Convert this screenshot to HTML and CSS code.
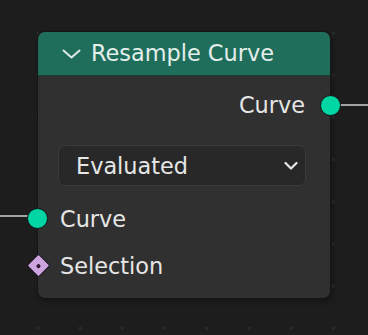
FILE: index.html
```html
<!DOCTYPE html>
<html>
<head>
<meta charset="utf-8">
<link rel="stylesheet" href="styles.css">
</head>
<body>
<div class="canvas">
  <div class="link link-out"></div>
  <div class="link link-in"></div>
  <div class="node">
    <div class="header">
      <svg class="chev" width="19" height="10" viewBox="0 0 19 10"><path d="M1.5 1.5 L9.5 8.5 L17.5 1.5" fill="none" stroke="#dfe9e6" stroke-width="2" stroke-linecap="round" stroke-linejoin="round"/></svg>
      <span class="title">Resample Curve</span>
    </div>
    <div class="body">
      <div class="row out">
        <span>Curve</span>
        <span class="socket circle right"></span>
      </div>
      <div class="dropdown">
        <span>Evaluated</span>
        <svg class="dd-chev" width="14" height="10" viewBox="0 0 14 10"><path d="M1.5 2 L7 7.5 L12.5 2" fill="none" stroke="#e6e6e6" stroke-width="2.2" stroke-linecap="round" stroke-linejoin="round"/></svg>
      </div>
      <div class="row in">
        <span class="socket circle left"></span>
        <span>Curve</span>
      </div>
      <div class="row in sel">
        <span class="socket diamond left"><span class="dot"></span></span>
        <span>Selection</span>
      </div>
    </div>
  </div>
</div>
</body>
</html>
```
FILE: styles.css
```css
html, body {
  margin: 0;
  padding: 0;
}
body {
  width: 368px;
  height: 335px;
  overflow: hidden;
  background-color: #1d1d1d;
  background-image: radial-gradient(circle at 21px 21px, #2a2a2a 0, #2a2a2a 1.4px, transparent 2px);
  background-size: 42.2px 42.2px;
  background-position: 17px 12px;
  font-family: "DejaVu Sans", sans-serif;
}
.canvas {
  position: relative;
  width: 368px;
  height: 335px;
  padding-top: 32px;
  box-sizing: border-box;
}
.link {
  position: absolute;
  height: 2px;
  background: #a3a3a3;
}
.link-out {
  left: 338px;
  width: 30px;
  top: 104px;
}
.link-in {
  left: 0;
  width: 30px;
  top: 215px;
}
.node {
  margin-left: 38px;
  width: 292px;
  height: 266px;
  border-radius: 7px;
  background: #303030;
  box-shadow: 0 0 0 1px #151515, 2px 3px 6px rgba(0,0,0,0.35);
  display: flex;
  flex-direction: column;
  position: relative;
}
.header {
  height: 43px;
  border-bottom: 1px solid #1a3f36;
  background: #1e6e5b;
  border-radius: 7px 7px 0 0;
  display: flex;
  align-items: center;
  padding-left: 24px;
  gap: 10px;
  color: #e4eeeb;
  font-size: 22.4px;
}
.chev {
  margin-top: 1px;
}
.title {
  line-height: 1;
  margin-top: -1px;
}
.body {
  display: flex;
  flex-direction: column;
  padding-top: 7px;
  color: #e6e6e6;
  font-size: 22.4px;
}
.row {
  height: 44px;
  display: flex;
  align-items: center;
  position: relative;
}
.row.out {
  justify-content: flex-end;
  padding-right: 25px;
}
.row.in {
  padding-left: 22px;
  height: 47px;
}
.dropdown {
  margin: 18px 24px 9px 20px;
  height: 39px;
  border: 1px solid #3b3b3b;
  border-radius: 7px;
  background: #282828;
  display: flex;
  align-items: center;
  justify-content: space-between;
  padding: 0 7px 0 17px;
}
.socket {
  position: absolute;
  box-sizing: border-box;
}
.socket.circle {
  width: 21px;
  height: 21px;
  border-radius: 50%;
  background: #00d6a3;
  border: 1.5px solid #141414;
  top: 50%;
  margin-top: -10.5px;
}
.socket.right {
  right: -11px;
}
.socket.left {
  left: -11px;
}
.socket.diamond {
  width: 17px;
  height: 17px;
  background: #cca5df;
  border: 1.5px solid #1a1020;
  border-radius: 2px;
  transform: rotate(45deg);
  top: 50%;
  margin-top: -8.5px;
  left: -8.5px;
  display: flex;
  align-items: center;
  justify-content: center;
}
.dot {
  width: 4px;
  height: 4px;
  border-radius: 50%;
  background: #2a1530;
}
```
